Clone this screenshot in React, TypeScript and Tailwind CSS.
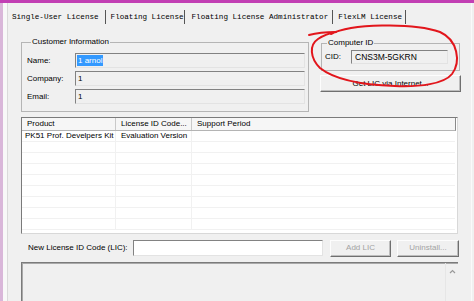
const tabs = [
  { label: "Single-User License", cls: "pl-[4px] pr-[6px]" },
  { label: "Floating License", cls: "pl-[5px] pr-[0px]" },
  { label: "Floating License Administrator", cls: "pl-[7px] pr-[4px]" },
  { label: "FlexLM License", cls: "pl-[5px] pr-[3px]" },
];

const rows = [
  ["PK51 Prof. Develpers Kit", "Evaluation Version", ""],
  ["", "", ""],
  ["", "", ""],
  ["", "", ""],
  ["", "", ""],
  ["", "", ""],
  ["", "", ""],
  ["", "", ""],
  ["", "", ""],
];

// sunken read-only field, Win7 style
function Field({ children, white }: { children?: React.ReactNode; white?: boolean }) {
  return (
    <div
      className={
        "h-full flex items-center pl-[1px] border border-t-[#828282] border-l-[#828282] border-b-[#e3e3e3] border-r-[#e3e3e3] " +
        (white ? "bg-white" : "bg-[#f0f0f0]")
      }
    >
      {children}
    </div>
  );
}

function Button({ label, disabled, className }: { label: string; disabled?: boolean; className: string }) {
  return (
    <div
      className={
        "flex items-center justify-center bg-[#f0f0f0] border border-t-[#fdfdfd] border-l-[#fdfdfd] border-b-[#6f6f6f] border-r-[#6f6f6f] shadow-[inset_-1px_-1px_0_#bdbdbd] " +
        (disabled ? "text-[#a3a3a3] " : "text-black ") +
        className
      }
    >
      {label}
    </div>
  );
}

export default function App() {
  return (
    <div className="relative w-[474px] h-[301px] overflow-hidden bg-[#f0f0f0] text-black font-['Liberation_Sans',Arial,sans-serif] text-[8px] leading-[10px] flex flex-col">
      <div className="h-[3px] bg-[#c23fb4]" />
      <div className="flex flex-1 min-h-0">
        {/* window frame on the left */}
        <div className="w-[3px] bg-[#d9b6d9]" />
        <div className="w-[5px] bg-[#f8f8f8] border-r border-[#dadada]" />

        <div className="flex-1 flex flex-col min-w-0">
          {/* tabs */}
          <div className="h-[24px] pt-[4px] flex items-center font-['Liberation_Mono',monospace] text-[7.6px]">
            {tabs.map((t) => (
              <span key={t.label} className={"h-[14px] leading-[14px] border-r border-[#555] whitespace-nowrap " + t.cls}>
                {t.label}
              </span>
            ))}
          </div>

          {/* tab page */}
          <div className="flex-1 flex flex-col pl-[13px] pt-[9px] min-h-0">
            <div className="flex items-start gap-[11px]">
              <fieldset className="w-[288px] border border-[#b5b5b5] pl-[5px] pt-[5px] pb-[7px]">
                <legend className="ml-[4px] px-[1px] leading-[12px]">Customer Information</legend>
                <div className="flex flex-col gap-[3px]">
                  <div className="flex items-center h-[15px]">
                    <span className="w-[48px]">Name:</span>
                    <div className="w-[230px] h-full">
                      <Field>
                        <span className="bg-[#3399ff] text-white px-[1px] leading-[11px]">1 arnol</span>
                      </Field>
                    </div>
                  </div>
                  <div className="flex items-center h-[15px]">
                    <span className="w-[48px]">Company:</span>
                    <div className="w-[230px] h-full">
                      <Field>
                        <span className="pl-[1px]">1</span>
                      </Field>
                    </div>
                  </div>
                  <div className="flex items-center h-[15px]">
                    <span className="w-[48px]">Email:</span>
                    <div className="w-[230px] h-full">
                      <Field>
                        <span className="pl-[1px]">1</span>
                      </Field>
                    </div>
                  </div>
                </div>
              </fieldset>

              <div className="w-[141px] flex flex-col pt-[1px]">
                <fieldset className="ml-[1px] w-[139px] border border-[#b5b5b5] pl-[3px] pt-[1px] pb-[6px]">
                  <legend className="ml-[2px] px-[1px] leading-[12px]">Computer ID</legend>
                  <div className="flex items-center h-[14px]">
                    <span className="w-[26px]">CID:</span>
                    <div className="w-[97px] h-full">
                      <Field>
                        <span className="pl-[2px] text-[8.5px]">CNS3M-5GKRN</span>
                      </Field>
                    </div>
                  </div>
                </fieldset>
                <Button label="Get LIC via Internet..." className="mt-[4px] h-[17px]" />
              </div>
            </div>

            {/* product list */}
            <div className="mt-[5px] w-[437px] h-[117px] flex flex-col bg-white border border-t-[#7a7a7a] border-l-[#7a7a7a] border-r-[#d8d8d8] border-b-[#d8d8d8] overflow-hidden">
              <div className="h-[13px] flex bg-[#f6f6f6] border-b border-[#b4b4b4] border-r border-r-[#8a8a8a] mr-[1px]">
                <div className="w-[94px] pl-[5px] border-r border-[#c9c9c9] leading-[12px]">Product</div>
                <div className="w-[76px] pl-[5px] border-r border-[#c9c9c9] leading-[12px]">License ID Code...</div>
                <div className="flex-1 pl-[5px] leading-[12px]">Support Period</div>
              </div>
              {rows.map((r, i) => (
                <div key={i} className="h-[11px] flex border-b border-[#f1f1f1] mr-[2px]">
                  <div className="w-[94px] pl-[3px] border-r border-[#f1f1f1] leading-[10px] whitespace-nowrap">{r[0]}</div>
                  <div className="w-[76px] pl-[5px] border-r border-[#f1f1f1] leading-[10px] whitespace-nowrap">{r[1]}</div>
                  <div className="flex-1 pl-[5px] leading-[10px]">{r[2]}</div>
                </div>
              ))}
            </div>

            {/* new LIC row */}
            <div className="mt-[6px] h-[16px] flex items-center">
              <span className="w-[112px] pl-[7px] whitespace-nowrap">New License ID Code (LIC):</span>
              <div className="w-[190px] h-full">
                <Field white />
              </div>
              <Button label="Add LIC" disabled className="ml-[7px] w-[61px] h-[17px]" />
              <Button label="Uninstall..." disabled className="ml-[6px] w-[62px] h-[17px]" />
            </div>

            {/* status area */}
            <div className="mt-[6px] w-[437px] flex-1 flex border-t border-l border-[#7b7b7b] shadow-[inset_1px_1px_0_#a9a9a9]">
              <div className="flex-1" />
              <div className="w-[13px] border-l border-[#e6e6e6] flex justify-center pt-[6px]">
                <svg width="7" height="5" viewBox="0 0 7 5">
                  <path d="M1 4 L3.5 1.5 L6 4" fill="none" stroke="#9a9a9a" strokeWidth="1.2" />
                </svg>
              </div>
            </div>
          </div>
        </div>
        <div className="w-[3px] border-l border-[#fafafa]" />
      </div>

      {/* red hand-drawn marker around the Computer ID */}
      <svg className="absolute left-0 top-0 pointer-events-none" width="474" height="301" viewBox="0 0 474 301">
        <path d="M309 35 Q320 32 336 32" fill="none" stroke="#e2161c" strokeWidth="2" strokeLinecap="round" />
        <path
          d="M331 34 C350 24 412 22 440 32 C458 40 461 62 452 74 C444 84 420 87 395 86 C365 85 335 80 320 68 C310 58 309 45 318 39 C324 35 330 33 336 32"
          fill="none"
          stroke="#e2161c"
          strokeWidth="2"
          strokeLinecap="round"
        />
      </svg>
    </div>
  );
}
